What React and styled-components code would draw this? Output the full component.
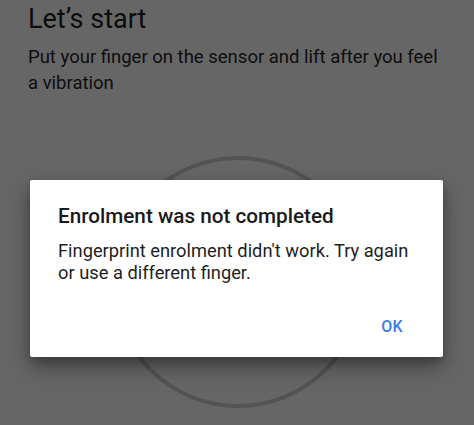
import React from "react";
import styled, { createGlobalStyle } from "styled-components";

const GlobalStyle = createGlobalStyle`
  html, body {
    margin: 0;
    padding: 0;
    background: #ffffff;
  }
  body {
    font-family: Roboto, "Noto Sans", "Liberation Sans", sans-serif;
    -webkit-font-smoothing: antialiased;
  }
`;

const Screen = styled.div`
  width: 474px;
  height: 425px;
  overflow: hidden;
  position: relative;
  background: #ffffff;
  color: #212121;
`;

const Content = styled.div`
  display: flex;
  flex-direction: column;
  padding: 0 28px;
`;

const Heading = styled.h1`
  margin: 0;
  padding-top: 2px;
  font-size: 27px;
  font-weight: 400;
  line-height: 34px;
  color: #1f1f1f;
`;

const Lead = styled.p`
  margin: 8px 0 0;
  font-size: 18.5px;
  line-height: 26px;
  font-weight: 400;
  color: #262626;
`;

const Sensor = styled.div`
  align-self: center;
  margin-top: 60px;
  margin-left: 2px;
  width: 244px;
  height: 244px;
  border-radius: 50%;
  border: 4px solid #cfcfcf;
  flex-shrink: 0;
`;

const Scrim = styled.div`
  position: absolute;
  inset: 0;
  background: rgba(0, 0, 0, 0.6);
  display: flex;
  justify-content: flex-start;
  align-items: flex-start;
  padding: 180px 0 0 30px;
`;

const Dialog = styled.div`
  width: 413px;
  height: 177px;
  box-sizing: border-box;
  background: #ffffff;
  border-radius: 2px;
  box-shadow: 0 10px 22px rgba(0, 0, 0, 0.35), 0 4px 8px rgba(0, 0, 0, 0.2);
  padding: 22px 24px 0 28px;
  display: flex;
  flex-direction: column;
`;

const DialogTitle = styled.h2`
  margin: 0;
  font-size: 20.7px;
  font-weight: 500;
  line-height: 28px;
  color: #1a1a1a;
`;

const DialogBody = styled.p`
  margin: 10px 0 0;
  font-size: 18.3px;
  line-height: 22px;
  font-weight: 400;
  color: #1e1e1e;
`;

const Actions = styled.div`
  display: flex;
  justify-content: flex-end;
  margin-top: 29px;
`;

const TextButton = styled.button`
  border: none;
  background: transparent;
  padding: 4px 16px;
  font-family: inherit;
  font-size: 16px;
  font-weight: 500;
  color: #3b7de6;
  letter-spacing: 0.3px;
  cursor: pointer;
`;

const App = () => {
  return (
    <>
      <GlobalStyle />
      <Screen>
        <Content>
          <Heading>Let’s start</Heading>
          <Lead>Put your finger on the sensor and lift after you feel a vibration</Lead>
          <Sensor />
        </Content>
        <Scrim>
          <Dialog role="dialog">
            <DialogTitle>Enrolment was not completed</DialogTitle>
            <DialogBody>
              Fingerprint enrolment didn't work. Try again or use a different finger.
            </DialogBody>
            <Actions>
              <TextButton>OK</TextButton>
            </Actions>
          </Dialog>
        </Scrim>
      </Screen>
    </>
  );
};

export default App;
